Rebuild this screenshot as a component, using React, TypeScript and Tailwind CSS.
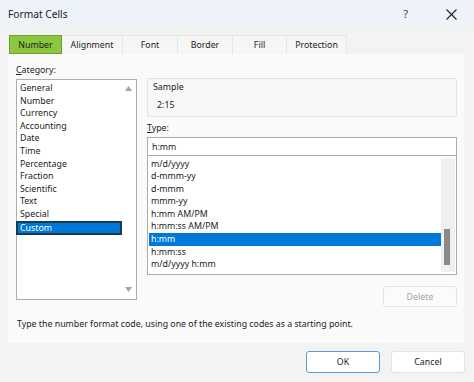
import React from 'react'

const categories = [
  'General',
  'Number',
  'Currency',
  'Accounting',
  'Date',
  'Time',
  'Percentage',
  'Fraction',
  'Scientific',
  'Text',
  'Special',
  'Custom',
]

const types = [
  'm/d/yyyy',
  'd-mmm-yy',
  'd-mmm',
  'mmm-yy',
  'h:mm AM/PM',
  'h:mm:ss AM/PM',
  'h:mm',
  'h:mm:ss',
  'm/d/yyyy h:mm',
]

const tabs = [
  { label: 'Number', w: 'w-[53px]' },
  { label: 'Alignment', w: 'w-[61px]' },
  { label: 'Font', w: 'w-[55px]' },
  { label: 'Border', w: 'w-[55px]' },
  { label: 'Fill', w: 'w-[54px]' },
  { label: 'Protection', w: 'w-[60px]' },
]

export default function App() {
  return (
    <div
      className="w-[474px] h-[382px] bg-[#f3f3f3] text-[#1a1a1a] overflow-hidden flex flex-col"
      style={{ fontFamily: '"Noto Sans", "Open Sans", sans-serif' }}
    >
      {/* Title bar */}
      <div className="h-[28px] shrink-0 bg-[#edf3f9] flex items-center pl-[8px]">
        <span className="text-[10.2px] leading-[14px]">Format Cells</span>
        <div className="flex-1" />
        <span className="text-[11px] leading-[14px] text-[#444] mr-[38px]">?</span>
        <svg width="11" height="11" viewBox="0 0 11 11" className="mr-[17px]">
          <path d="M0.5 0.5 L10.5 10.5 M10.5 0.5 L0.5 10.5" stroke="#222" strokeWidth="1.1" />
        </svg>
      </div>

      {/* Tabs */}
      <div className="flex pl-[9px] pt-[7px] h-[26px] shrink-0 box-border">
        {tabs.map((t, i) =>
          i === 0 ? (
            <div
              key={t.label}
              className={`${t.w} h-[19px] bg-[#8dc63f] border border-[#6e9e2e] flex items-center justify-center text-[8.8px] leading-[12px]`}
            >
              {t.label}
            </div>
          ) : (
            <div
              key={t.label}
              className={`${t.w} h-[19px] bg-[#f6f6f6] border-t border-r border-[#e6e6e6] flex items-center justify-center text-[8.8px] leading-[12px] text-[#222]`}
            >
              {t.label}
            </div>
          ),
        )}
      </div>

      {/* Panel */}
      <div className="ml-[8px] w-[456px] h-[289px] shrink-0 bg-[#fafafa] flex flex-col">
        <div className="flex">
          {/* Category column */}
          <div className="ml-[8px] w-[121px] pt-[8px]">
            <div className="h-[16px] flex items-center text-[8.8px] leading-[12px]">
              <span>
                <span className="underline">C</span>ategory:
              </span>
            </div>
            <div className="mt-[1px] h-[221px] bg-white border border-[#adadad] relative pt-[2px]">
              {categories.map((c) =>
                c === 'Custom' ? (
                  <div
                    key={c}
                    className="h-[14px] w-[106px] -ml-px bg-[#0078d7] border-2 border-[#1b3c50] text-white text-[8.8px] leading-[10px] pl-[2px] flex items-center"
                  >
                    {c}
                  </div>
                ) : (
                  <div key={c} className="h-[12.6px] leading-[12.6px] text-[8.8px] pl-[3px]">
                    {c}
                  </div>
                ),
              )}
              <svg width="7" height="5" viewBox="0 0 7 5" className="absolute right-[4px] top-[6px]">
                <path d="M0 5 L3.5 0 L7 5 Z" fill="#a6a6a6" />
              </svg>
              <svg width="7" height="5" viewBox="0 0 7 5" className="absolute right-[4px] bottom-[7px]">
                <path d="M0 0 L3.5 5 L7 0 Z" fill="#a6a6a6" />
              </svg>
            </div>
          </div>

          {/* Right column */}
          <div className="ml-[10px] w-[310px] pt-[24px]">
            <div className="h-[39px] border border-[#e3e3e3] bg-[#f7f7f7] rounded-[2px] pl-[5px] pt-[2px]">
              <div className="text-[8.8px] leading-[12px]">Sample</div>
              <div className="text-[8.8px] leading-[12px] mt-[6px] pl-[4px]">2:15</div>
            </div>
            <div className="h-[16px] mt-[3px] flex items-center text-[8.8px] leading-[12px]">
              <span>
                <span className="underline">T</span>ype:
              </span>
            </div>
            <div className="h-[19px] mt-[1px] bg-white border border-[#adadad] text-[8.8px] leading-[12px] pl-[4px] flex items-center">
              h:mm
            </div>
            <div className="h-[119px] bg-white border border-[#adadad] border-t-0 flex">
              <div className="flex-1 pt-[1.5px]">
                {types.map((t) => (
                  <div
                    key={t}
                    className={
                      t === 'h:mm'
                        ? 'h-[12.6px] leading-[12.6px] text-[8.8px] pl-[2px] ml-px bg-[#0078d7] text-white'
                        : 'h-[12.6px] leading-[12.6px] text-[8.8px] pl-[3px]'
                    }
                  >
                    {t}
                  </div>
                ))}
              </div>
              <div className="w-[14px] bg-[#f0f0f0] my-[2px] mr-px relative">
                <div className="absolute left-[3px] top-[71px] w-[6px] h-[36px] bg-[#8a8a8a]" />
              </div>
            </div>
            <div className="flex justify-end mt-[11px]">
              <div className="w-[74px] h-[21px] bg-[#fbfbfb] border border-[#e3e3e3] rounded-[3px] text-[8.8px] leading-[12px] text-[#a3a3a3] flex items-center justify-center">
                Delete
              </div>
            </div>
          </div>
        </div>
        <div className="ml-[9px] mt-[11px] text-[8.8px] leading-[12px]">
          Type the number format code, using one of the existing codes as a starting point.
        </div>
      </div>

      {/* Bottom buttons */}
      <div className="flex justify-end pr-[9px] pt-[8px] gap-[11px]">
        <div className="w-[74px] h-[22px] bg-white border border-[#5b9bd5] rounded-[3px] text-[8.8px] leading-[12px] flex items-center justify-center">
          OK
        </div>
        <div className="w-[74px] h-[22px] bg-white border border-[#e3e3e3] rounded-[3px] text-[8.8px] leading-[12px] flex items-center justify-center">
          Cancel
        </div>
      </div>
    </div>
  )
}
